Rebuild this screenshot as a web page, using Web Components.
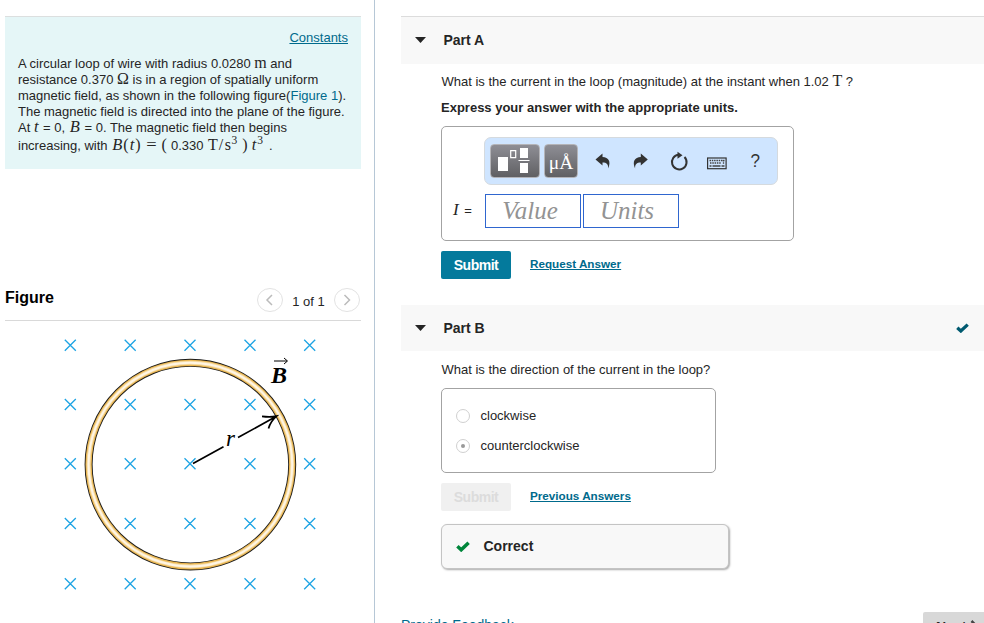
<!DOCTYPE html>
<html lang="en">
<head>
<meta charset="utf-8">
<title>Current in a loop</title>
<style>
html, body { margin: 0; height: 623px; overflow: hidden; background: #fff; }
body { font: 13px/16px "Liberation Sans", Arial, sans-serif; color: #252525; }
</style>
</head>
<body>
<assignment-page></assignment-page>
<script>
function define(name, css, html) {
  const template = document.createElement('template');
  template.innerHTML = '<style>*{box-sizing:border-box}' + css + '</style>' + html;
  customElements.define(name, class extends HTMLElement {
    constructor() {
      super();
      this.attachShadow({ mode: 'open' }).append(template.content.cloneNode(true));
    }
    connectedCallback() {
      if (name === 'field-figure') drawField(this.shadowRoot.querySelector('#field'));
    }
  });
}

// Crosses mark the field directed into the page.
function drawField(path) {
  let d = '';
  for (const y of [24.3, 83.5, 142.7, 202.5, 262.7])
    for (const x of [65.3, 125.2, 185, 245, 304.7])
      d += `M${x - 5.5} ${y - 5.5}l11 11M${x + 5.5} ${y - 5.5}l-11 11`;
  path.setAttribute('d', d);
}

define('check-mark', ':host{display:block;width:14px;height:11px}svg{display:block;width:100%;height:100%}',
  `<svg viewBox="0 0 14 11" preserveAspectRatio="none"><path d="M1.4 5.2 5.2 8.8 12.6 1.7" fill="none" stroke="currentColor" stroke-width="3.5"/></svg>`);

define('part-header', `
  :host{display:flex;align-items:center;height:48px;padding:0 15px 0 14px;background:#f8f8f8;font:bold 14px/16px "Liberation Sans",Arial,sans-serif;color:#252525}
  .tri{width:11px;height:6px;background:#252525;clip-path:polygon(0 0,100% 0,50% 100%);margin-right:17.5px}
  .end{margin-left:auto;color:#005a70}`,
  `<div class="tri"></div><slot></slot><div class="end"><slot name="status"></slot></div>`);

define('submit-row', `
  :host{display:flex;height:28px;gap:19px}
  .btn{width:70px;height:28px;border-radius:2px;background:var(--bg,#047a9c);color:var(--fg,#fff);font:bold 14px/28px "Liberation Sans",Arial,sans-serif;letter-spacing:-.5px;text-align:center}
  .link{font:bold 11.7px/14px "Liberation Sans",Arial,sans-serif;color:#006a8c;padding-top:6px;text-decoration:underline;white-space:nowrap}`,
  `<div class="btn">Submit</div><div class="link"><slot></slot></div>`);

define('problem-box', `
  :host{display:block;height:153px;background:#e5f6f7;border-top:1px solid #dcdfdf;padding:13px 13px 0;white-space:nowrap}
  .const{text-align:right;height:26px;color:#006a8c;text-decoration:underline}
  .l{height:16px}.last{height:20px;line-height:20px}
  .fig{color:#006a8c}
  .m{font-family:"Liberation Serif",serif;font-size:16px;line-height:0}
  i.m{font-size:16.5px}
  .eq{margin:0 6px;display:inline-block;transform:scaleX(1.15)}
  sup{font-size:11.5px;line-height:0;vertical-align:6px}`,
  `<div class="const">Constants</div>
   <div class="l">A circular loop of wire with radius 0.0280 <span class="m">m</span> and</div>
   <div class="l">resistance 0.370 <span class="m">Ω</span> is in a region of spatially uniform</div>
   <div class="l">magnetic field, as shown in the following figure(<span class="fig">Figure 1</span>).</div>
   <div class="l">The magnetic field is directed into the plane of the figure.</div>
   <div class="l">At <i class="m" style="margin-right:1px">t</i> = 0, <i class="m" style="margin:0 1px">B</i> = 0. The magnetic field then begins</div>
   <div class="last">increasing, with <i class="m" style="margin:0 1px">B</i><span class="m">(</span><i class="m" style="margin:0 1px">t</i><span class="m">)<span class="eq">=</span><span style="margin-right:4px">(</span></span>0.330 <span class="m" style="margin-left:1px"><span style="margin-right:1px">T</span>/<span style="margin:0 .5px 0 1.500px">s</span><sup>3</sup><span style="margin:0 4px 0 5px">)</span></span><i class="m" style="margin-right:1px">t</i><span class="m"><sup>3</sup></span><span style="margin-left:6px">.</span></div>`);

define('figure-header', `
  :host{display:flex;height:33px;border-bottom:1px solid #d9d9d9;color:#252525}
  .t{font:bold 16px/20px "Liberation Sans",Arial,sans-serif;color:#000}
  .p{margin-left:auto;display:flex;gap:9px;padding-right:1px}
  svg{width:26px;height:24px;display:block}
  .n{line-height:28px;width:33px;text-align:center;white-space:nowrap}`,
  `<div class="t">Figure</div><div class="p">
   <svg viewBox="0 0 26 24" fill="none"><ellipse cx="13" cy="12" rx="12.5" ry="11.5" stroke="#e2e2e2"/><path d="M15 7l-5 5 5 5" stroke="#bbb" stroke-width="1.5"/></svg>
   <div class="n">1 of 1</div>
   <svg viewBox="0 0 26 24" fill="none"><ellipse cx="13" cy="12" rx="12.5" ry="11.5" stroke="#e2e2e2"/><path d="M10.5 7l5 5-5 5" stroke="#bbb" stroke-width="1.5"/></svg></div>`);

define('field-figure', ':host{display:block}svg{display:block}text{font-family:"Liberation Serif",serif;font-style:italic;fill:#000}',
  `<svg width="356" height="302" viewBox="0 0 356 302" fill="none">
   <circle cx="185.4" cy="143.6" r="101.8" stroke="#1a1a1a" stroke-width="8"/>
   <circle cx="185.4" cy="143.6" r="101.8" stroke="#e9b550" stroke-width="6.2"/>
   <circle cx="185.4" cy="143.6" r="101.8" stroke="#f6dca4" stroke-width="4"/>
   <circle cx="185.4" cy="143.6" r="101.8" stroke="#fff5e4" stroke-width="2"/>
   <path id="field" stroke="#1ea4e4" stroke-width="1.3"/>
   <path d="M188 142.500 218.500 125.700M233 116.500 271 95.600M257 95.400Q265 96.500 271.500 95.200Q265.500 100.500 263.500 107.500" stroke="#000" stroke-width="1.700"/>
   <path d="M269 40H282M279 37 282.500 40 279 43" stroke="#000" stroke-width="1"/>
   <text x="266" y="61.8" font-size="24" font-weight="bold">B</text>
   <text x="221" y="124.500" font-size="23">r</text></svg>`);

define('answer-editor', `
  :host{display:block;width:353px;height:115px;border:1px solid #a3a3a3;border-radius:5px;padding:10px 0 0 10px}
  .bar{margin-left:32px;width:294px;height:48px;background:#cfe5ff;border:1px solid #d5dade;border-radius:7px;display:flex;padding:6px 5px;gap:4px}
  .bar>*{flex:none}
  .b{height:34px;border:1px solid #b4b4b8;border-radius:4px;background:linear-gradient(#8e8e95,#606063);color:#fff}
  .b svg{display:block}.b1{width:50px}.b2{width:34px;font:19.500px/35px "Liberation Serif",serif;text-align:center}
  .tools{margin-left:4px}
  .row{display:flex;margin-top:9px;height:34px}
  .lab{width:33px;line-height:34px;white-space:nowrap;font-size:13px;padding-left:1px}
  .lab i{font:italic 17px/1 "Liberation Serif",serif;margin-right:2px}
  .in{width:96px;height:34px;border:1px solid #2f66cf;margin-right:2px;font:italic 25px/32px "Liberation Serif",serif;color:#939393;text-align:center;padding-right:6px}
  .in+.in{padding-right:8px}
  text{font:19px "Liberation Sans",Arial,sans-serif;fill:#333}`,
  `<div class="bar">
    <div class="b b1"><svg width="48" height="32"><path d="M7 12h10v14H7zM29 3h8v10h-8zM29 18h8v10h-8z" fill="#fff"/><path d="M19.700 5.700h5v7h-5zM27.500 15.500h11" fill="none" stroke="#fff" stroke-width="1.200"/></svg></div>
    <div class="b b2">μÅ</div>
    <svg class="tools" width="186" height="34" viewBox="586 144 186 34" fill="none">
      <path d="M595.500 159.500l7-6v3.500c6.200.6 8.700 4.300 5.700 11.500.2-4.300-1.500-6-5.700-6v3z" fill="#333"/>
      <path d="M647.800 159.500l-7-6v3.500c-6.200.6-8.700 4.300-5.700 11.500-.2-4.300 1.500-6 5.700-6v3z" fill="#333"/>
      <path d="M684.500 157A7.300 7.300 0 1 1 678.800 154.800" stroke="#333" stroke-width="2"/><path d="M677.500 151.800l5 3.500-5 3.500z" fill="#333"/>
      <rect x="707.600" y="158" width="18.500" height="10.700" stroke="#333" stroke-width="1.200"/>
      <path d="M709.500 160.500h15M710 163h11M723.500 160v4" stroke="#444" stroke-width="1.300" stroke-dasharray="1.500 .8"/><path d="M709.500 166h2m1 0h8m1 0h3" stroke="#444" stroke-width="1.300"/>
      <text x="750.500" y="167" textLength="9.500" lengthAdjust="spacingAndGlyphs">?</text>
    </svg></div>
   <div class="row"><div class="lab"><i>I</i> =</div><div class="in">Value</div><div class="in">Units</div></div>`);

define('radio-option', `
  :host{display:flex;align-items:center;gap:10.500px;height:30px}
  .o{width:14px;height:14px;border:1px solid #d0d0d0;border-radius:50%;display:grid;place-items:center;background:#fff}
  :host([checked]) .o::after{content:"";width:4px;height:4px;border-radius:50%;background:#999}`,
  `<div class="o"></div><slot></slot>`);

define('assignment-page', `
  :host{display:grid;grid-template-columns:375px 1fr;width:984px;height:623px;overflow:hidden}
  .left{border-right:1px solid #b6c7d6;padding:16px 13px 0 5px}
  figure-header{margin-top:119px}
  .right{padding:16px 0 0 26px;min-width:0}
  .a{height:48px;border-top:1px solid #dcdcdc;padding-bottom:1px}.b{height:46px;margin-top:26px}
  .body{padding-left:40px;white-space:nowrap}
  .q1{padding-top:10px;height:27px;padding-left:.5px}.m{font:16px/0 "Liberation Serif",serif}
  .ex{padding-top:9px;height:35px;font-weight:bold}
  .s1{margin-top:10px}
  .q2{padding-top:11px;height:37px;padding-left:.5px}
  .choices{width:275px;height:85px;border:1px solid #a3a3a3;border-radius:5px;padding:12px 14px}
  .s2{margin-top:10px;--bg:#f0f0f0;--fg:#dcdcdc}
  .ok{margin-top:13px;width:288px;height:45px;border:1px solid #c4c4c4;border-radius:6px;background:#f8f8f8;box-shadow:1px 1px 2px #aaa;display:flex;align-items:center;gap:13.500px;padding:0 14px 1px;font:bold 14px/16px "Liberation Sans",Arial,sans-serif}
  .ok check-mark{color:#00863b}
  part-header check-mark{width:13px;height:10px;margin-top:-1px}
  .foot{display:flex;justify-content:space-between;margin-top:43px;height:30px;font-size:14px;color:#006a8c}
  .fb{padding-top:5px}
  .next{width:61px;background:#d8d8d8;border-radius:2px 0 0 0;color:#252525;font-weight:bold;padding:7px 0 0 13px;display:flex;gap:4px}`,
  `<div class="left"><problem-box></problem-box><figure-header></figure-header><field-figure></field-figure></div>
   <div class="right">
    <part-header class="a">Part A</part-header>
    <div class="body"><div class="q1">What is the current in the loop (magnitude) at the instant when 1.02 <span class="m">T</span> ?</div>
     <div class="ex">Express your answer with the appropriate units.</div>
     <answer-editor></answer-editor><submit-row class="s1">Request Answer</submit-row></div>
    <part-header class="b">Part B<check-mark slot="status"></check-mark></part-header>
    <div class="body"><div class="q2">What is the direction of the current in the loop?</div>
     <div class="choices"><radio-option>clockwise</radio-option><radio-option checked>counterclockwise</radio-option></div>
     <submit-row class="s2">Previous Answers</submit-row>
     <div class="ok"><check-mark></check-mark>Correct</div></div>
    <div class="foot"><div class="fb">Provide Feedback</div><div class="next">Next <svg width="8" height="14"><path d="M1.500 2l5 5-5 5" fill="none" stroke="#444" stroke-width="2.500"/></svg></div></div>
   </div>`);
</script>
</body>
</html>
